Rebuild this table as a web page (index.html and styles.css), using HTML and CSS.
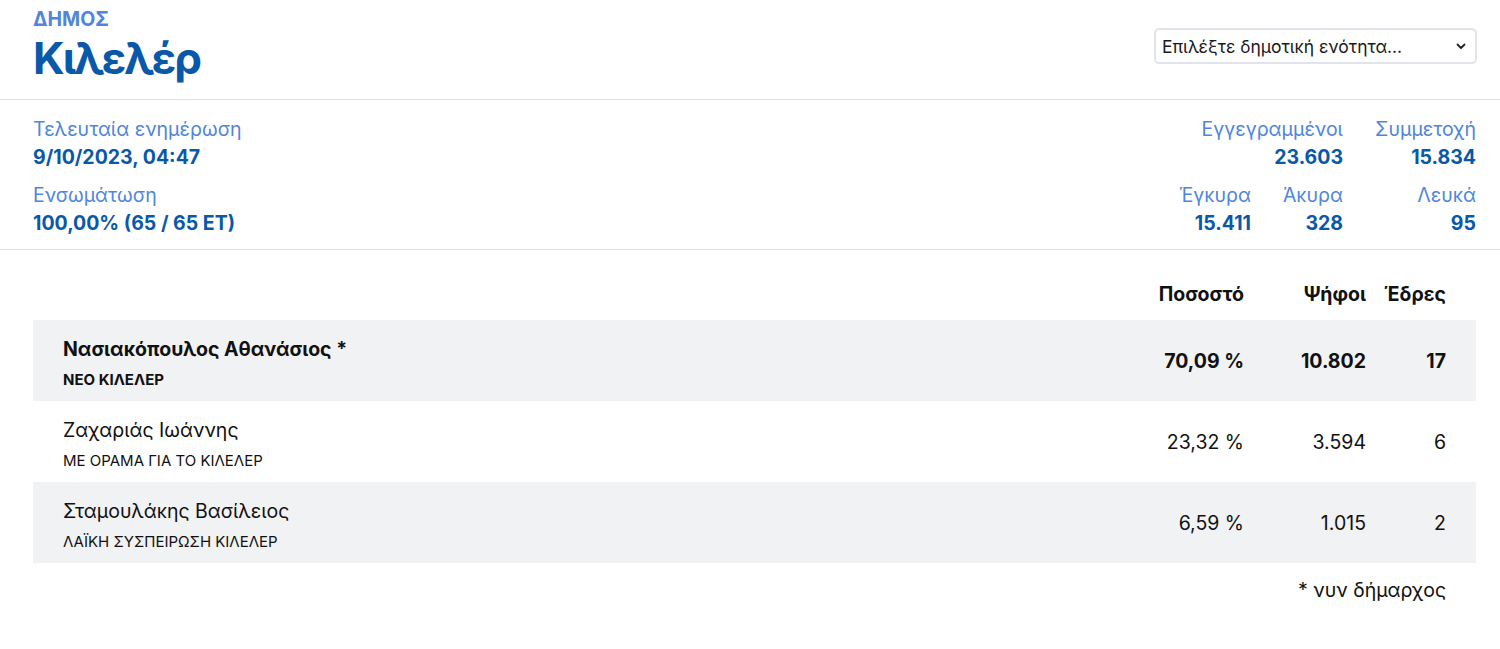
FILE: index.html
```html
<!DOCTYPE html>
<html lang="el">
<head>
  <meta charset="UTF-8" />
  <meta name="viewport" content="width=device-width, initial-scale=1.0"/>
  <title>Δήμος Κιλελέρ</title>
  <link rel="stylesheet" href="styles.css">
</head>
<body>
  <header class="top">
    <div>
      <div class="kind">Δήμος</div>
      <h1>Κιλελέρ</h1>
    </div>
    <div class="select-wrap">
      <select class="unit-select">
        <option>Επιλέξτε δημοτική ενότητα...</option>
      </select>
      <svg class="chevron" width="10" height="7" viewBox="0 0 10 7">
        <path d="M1.5 1.5 L5 5 L8.5 1.5" fill="none" stroke="#222" stroke-width="1.8" stroke-linecap="round" stroke-linejoin="round"/>
      </svg>
    </div>
  </header>

  <section class="stats">
    <div class="stats-left">
      <div class="stat">
        <div class="label">Τελευταία ενημέρωση</div>
        <div class="value">9/10/2023, 04:47</div>
      </div>
      <div class="stat">
        <div class="label">Ενσωμάτωση</div>
        <div class="value">100,00% (65 / 65 ΕΤ)</div>
      </div>
    </div>
    <div class="stats-right">
      <div class="stat span2">
        <div class="label">Εγγεγραμμένοι</div>
        <div class="value">23.603</div>
      </div>
      <div class="stat">
        <div class="label">Συμμετοχή</div>
        <div class="value">15.834</div>
      </div>
      <div class="stat">
        <div class="label">Έγκυρα</div>
        <div class="value">15.411</div>
      </div>
      <div class="stat">
        <div class="label">Άκυρα</div>
        <div class="value">328</div>
      </div>
      <div class="stat">
        <div class="label">Λευκά</div>
        <div class="value">95</div>
      </div>
    </div>
  </section>

  <section class="results">
    <table>
      <thead>
        <tr>
          <th></th>
          <th class="num">Ποσοστό</th>
          <th class="num">Ψήφοι</th>
          <th class="num">Έδρες</th>
        </tr>
      </thead>
      <tbody>
        <tr class="winner">
          <td>
            <div class="name">Νασιακόπουλος Αθανάσιος *</div>
            <div class="party">ΝΕΟ ΚΙΛΕΛΕΡ</div>
          </td>
          <td class="num">70,09 %</td>
          <td class="num">10.802</td>
          <td class="num">17</td>
        </tr>
        <tr>
          <td>
            <div class="name">Ζαχαριάς Ιωάννης</div>
            <div class="party">ΜΕ ΟΡΑΜΑ ΓΙΑ ΤΟ ΚΙΛΕΛΕΡ</div>
          </td>
          <td class="num">23,32 %</td>
          <td class="num">3.594</td>
          <td class="num">6</td>
        </tr>
        <tr>
          <td>
            <div class="name">Σταμουλάκης Βασίλειος</div>
            <div class="party">ΛΑΪΚΗ ΣΥΣΠΕΙΡΩΣΗ ΚΙΛΕΛΕΡ</div>
          </td>
          <td class="num">6,59 %</td>
          <td class="num">1.015</td>
          <td class="num">2</td>
        </tr>
      </tbody>
    </table>
    <div class="note">* νυν δήμαρχος</div>
  </section>
</body>
</html>
```

FILE: styles.css
```css
body {
  margin: 0;
  font-family: Inter, "Liberation Sans", Arial, sans-serif;
  background: #fff;
  color: #111;
}
.top {
  display: flex;
  justify-content: space-between;
  align-items: flex-start;
  padding: 7px 23px 0 33px;
  height: 92px;
  border-bottom: 1px solid #dde1e6;
}
.kind {
  color: #4f86dc;
  font-weight: 700;
  font-size: 19.5px;
  text-transform: uppercase;
  line-height: 24px;
}
h1 {
  margin: 0;
  color: #0a58a8;
  font-size: 44px;
  font-weight: 700;
  letter-spacing: -2px;
  line-height: 54px;
}
.select-wrap {
  position: relative;
  margin-top: 21px;
}
.unit-select {
  appearance: none;
  -webkit-appearance: none;
  display: block;
  width: 323px;
  height: 36px;
  font-family: inherit;
  font-size: 17.5px;
  color: #1a1a1a;
  background: #fff;
  border: 2px solid #e1e5eb;
  border-radius: 5px;
  padding: 0 30px 0 6px;
}
.chevron {
  position: absolute;
  right: 11px;
  top: 15px;
  pointer-events: none;
}
.stats {
  display: flex;
  justify-content: space-between;
  padding: 15px 24px 12px 33px;
  border-bottom: 1px solid #dde1e6;
}
.stats-left {
  display: flex;
  flex-direction: column;
  gap: 10px;
}
.stats-right {
  display: grid;
  grid-template-columns: auto 92px 133px;
  row-gap: 10px;
  text-align: right;
}
.span2 {
  grid-column: span 2;
}
.label {
  color: #4f86dc;
  font-size: 19.5px;
  line-height: 28px;
}
.value {
  color: #0a58a8;
  font-weight: 700;
  font-size: 19.5px;
  line-height: 28px;
}
.results {
  padding: 31px 24px 0 33px;
}
table {
  width: 100%;
  border-collapse: collapse;
  font-size: 19.5px;
}
.num {
  text-align: right;
  padding: 0;
  white-space: nowrap;
}
.results thead th {
  font-weight: 700;
  padding-top: 0;
  padding-bottom: 13px;
  line-height: 26px;
}
th.num:nth-child(2), td.num:nth-child(2) {
  width: 140px;
}
th.num:nth-child(3), td.num:nth-child(3) {
  width: 122px;
}
th.num:nth-child(4), td.num:nth-child(4) {
  width: 80px;
  padding-right: 30px;
}
tbody tr:nth-child(odd) {
  background: #f1f2f4;
}
td {
  height: 81px;
  padding: 0;
}
td:first-child {
  padding-left: 30px;
}
.name {
  font-size: 19.5px;
  line-height: 24px;
  padding-top: 4px;
}
.party {
  font-size: 15px;
  line-height: 18px;
  margin-top: 10px;
}
.winner .name, .winner .party, .winner .num {
  font-weight: 700;
}
.note {
  text-align: right;
  padding: 15px 30px 0 0;
  font-size: 19.5px;
  line-height: 24px;
}
```
